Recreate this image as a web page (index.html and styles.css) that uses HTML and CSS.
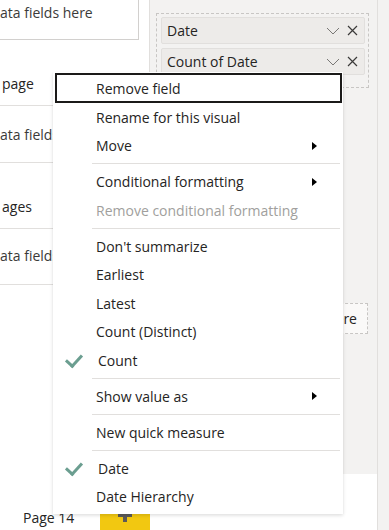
FILE: index.html
```html
<!DOCTYPE html>
<html lang="en">
<head>
<meta charset="utf-8">
<title>Field menu</title>
<link rel="stylesheet" href="styles.css">
</head>
<body>
<div class="app">
  <div class="main">
    <div class="panes">
      <aside class="filters">
        <div class="drop-box"><span>ata fields here</span></div>
        <div class="f-head">page</div>
        <div class="f-drop">ata fields here</div>
        <div class="f-head">ages</div>
        <div class="f-drop last">ata fields here</div>
      </aside>
      <section class="viz">
        <div class="well">
          <div class="pill">
            <span class="pill-label">Date</span>
            <svg class="chev" width="14" height="8" viewBox="0 0 14 8"><path d="M1 1l6 6 6-6" fill="none" stroke="#797775" stroke-width="1"/></svg>
            <svg class="close" width="11" height="11" viewBox="0 0 11 11"><path d="M1 1l9 9M10 1l-9 9" fill="none" stroke="#3b3a39" stroke-width="1.2"/></svg>
          </div>
          <div class="pill">
            <span class="pill-label">Count of Date</span>
            <svg class="chev" width="14" height="8" viewBox="0 0 14 8"><path d="M1 1l6 6 6-6" fill="none" stroke="#797775" stroke-width="1"/></svg>
            <svg class="close" width="11" height="11" viewBox="0 0 11 11"><path d="M1 1l9 9M10 1l-9 9" fill="none" stroke="#3b3a39" stroke-width="1.2"/></svg>
          </div>
        </div>
        <div class="drop-zone">Add drill-through fields here</div>
      </section>
    </div>
    <footer class="tabbar">
      <span class="tab">Page 14</span>
      <span class="add-page">
        <svg width="14" height="14" viewBox="0 0 14 14"><path d="M7 0v14M0 7h14" stroke="#5c5a58" stroke-width="4"/></svg>
      </span>
    </footer>
  </div>
  <div class="edge"></div>

  <ul class="menu">
    <li class="mi focus">Remove field</li>
    <li class="mi">Rename for this visual</li>
    <li class="mi sub">Move</li>
    <li class="sep"></li>
    <li class="mi sub">Conditional formatting</li>
    <li class="mi disabled">Remove conditional formatting</li>
    <li class="sep"></li>
    <li class="mi">Don't summarize</li>
    <li class="mi">Earliest</li>
    <li class="mi">Latest</li>
    <li class="mi">Count (Distinct)</li>
    <li class="mi checked">Count</li>
    <li class="sep"></li>
    <li class="mi sub">Show value as</li>
    <li class="sep"></li>
    <li class="mi">New quick measure</li>
    <li class="sep"></li>
    <li class="mi checked">Date</li>
    <li class="mi">Date Hierarchy</li>
  </ul>
</div>
</body>
</html>
```

FILE: styles.css
```css
* { box-sizing: border-box; }

html, body {
  margin: 0;
  padding: 0;
}

body {
  width: 389px;
  height: 530px;
  overflow: hidden;
  font-family: "Open Sans", "Noto Sans", sans-serif;
  font-size: 14px;
  color: #252423;
  background: #ffffff;
}

.app {
  position: relative;
  display: flex;
  width: 389px;
  height: 530px;
}

.main {
  width: 377px;
  display: flex;
  flex-direction: column;
}

.panes {
  flex: 1;
  display: flex;
}

/* Filters pane */
.filters {
  width: 149px;
  background: #ffffff;
}

.drop-box {
  width: 139px;
  height: 40px;
  padding-top: 3px;
  line-height: 20px;
  border-right: 1px solid #d2d0ce;
  border-bottom: 1px solid #d2d0ce;
  color: #3b3a39;
  white-space: nowrap;
  overflow: hidden;
}

.f-head,
.f-drop {
  width: 139px;
  line-height: 20px;
  border-bottom: 1px solid #e1dfdd;
  white-space: nowrap;
  overflow: hidden;
  padding-left: 2px;
}

.f-head {
  height: 66px;
  padding-top: 34px;
  color: #252423;
}

.f-drop {
  height: 57px;
  padding-top: 19px;
  padding-left: 0;
  color: #3b3a39;
}

.f-drop.last {
  height: 56px;
  padding-top: 17px;
}

/* Visualizations column */
.viz {
  flex: 1;
  background: #f3f2f1;
  border-left: 1px solid #e1dfdd;
  padding-top: 13px;
  padding-left: 6px;
}

.well {
  width: 213px;
  border: 1px dashed #c8c6c4;
  padding: 3px 3px 12px 4px;
  display: flex;
  flex-direction: column;
  gap: 4px;
}

.pill {
  height: 27px;
  display: flex;
  align-items: center;
  padding: 0 6px 0 5px;
  background: #edebe9;
  border: 1px solid #e1dfdd;
  border-radius: 2px;
  color: #252423;
}

.pill-label {
  flex: 1;
  white-space: nowrap;
}

.chev { margin-right: 7px; }

.drop-zone {
  margin-top: 215px;
  width: 212px;
  height: 31px;
  border: 1px dashed #c8c6c4;
  background: #faf9f8;
  text-align: right;
  padding-right: 10px;
  line-height: 29px;
  color: #252423;
  white-space: nowrap;
  overflow: hidden;
}

/* Page tabs */
.tabbar {
  height: 56px;
  background: #ffffff;
  display: flex;
  align-items: flex-end;
}

.tab {
  width: 100px;
  height: 30px;
  padding-left: 23px;
  padding-top: 6px;
  line-height: 24px;
  color: #252423;
}

.add-page {
  width: 50px;
  height: 30px;
  background: #f2c811;
  display: flex;
  align-items: center;
  justify-content: center;
}

.edge {
  width: 12px;
  background: #f3f2f1;
  border-left: 1px solid #e1dfdd;
}

/* Context menu */
.menu {
  position: absolute;
  left: 53px;
  top: 72px;
  width: 290px;
  margin: 0;
  padding: 2.5px 0;
  list-style: none;
  background: #ffffff;
  box-shadow: 0 1.6px 3.6px rgba(0, 0, 0, 0.14), 0 0.3px 1px rgba(0, 0, 0, 0.12);
}

.mi {
  position: relative;
  height: 28.5px;
  display: flex;
  align-items: center;
  padding-left: 43px;
  color: #252423;
  white-space: nowrap;
}

.mi.focus {
  margin: -1.5px 1px 0 2px;
  height: 30px;
  padding-left: 39px;
  border: 2px solid #1b1a19;
}

.mi.disabled { color: #a19f9d; }

.mi.checked { padding-left: 45px; }

.mi.checked::before {
  content: "";
  position: absolute;
  left: 16px;
  top: 50%;
  width: 7px;
  height: 13px;
  margin-top: -9px;
  border-right: 3px solid #6b9e90;
  border-bottom: 3px solid #6b9e90;
  transform: rotate(42deg);
}

.mi.sub::after {
  content: "";
  position: absolute;
  right: 26px;
  top: 50%;
  margin-top: -4px;
  border-left: 5px solid #000000;
  border-top: 4px solid transparent;
  border-bottom: 4px solid transparent;
}

.sep {
  height: 1px;
  margin: 3.25px 3px 3.25px 39px;
  background: #e1dfdd;
}
```
